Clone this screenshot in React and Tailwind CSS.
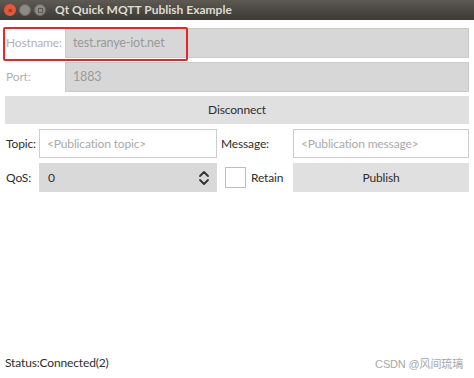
import React from 'react'

const font = { fontFamily: 'Lato, "Noto Sans", sans-serif' }

const App = () => {
    return (
        <div className="relative w-[474px] h-[378px] bg-white flex flex-col overflow-hidden text-[12px] tracking-[-0.15px] text-[#2e2e2e]" style={font}>
            {/* window title bar */}
            <div className="h-[20px] flex items-center bg-gradient-to-b from-[#5e5a53] to-[#3b3a35] px-[4px] gap-[3px]">
                <div className="w-[12px] h-[12px] rounded-full bg-[#e2583e] flex items-center justify-center text-[8px] leading-none text-[#7a2a1a] font-bold">×</div>
                <div className="w-[12px] h-[12px] rounded-full bg-[#8d8a84] border border-[#6e6b66]"></div>
                <div className="w-[12px] h-[12px] rounded-full bg-[#8d8a84] border border-[#6e6b66] flex items-center justify-center">
                    <div className="w-[5px] h-[5px] border border-[#5c5a55]"></div>
                </div>
                <div className="ml-[6px] text-[12px] font-bold text-[#dfdbd2] tracking-[0px]">Qt Quick MQTT Publish Example</div>
            </div>

            <div className="flex flex-col px-[5px] pt-[8px] gap-[4px]">
                <div className="flex items-center h-[30px]">
                    <span className="w-[60px] text-[#b2b2b2] pl-[1px] whitespace-nowrap">Hostname:</span>
                    <div className="flex-1 h-full bg-[#d7d7d7] border border-[#cbcbcb] flex items-center px-[7px] text-[#9a9a9a] text-[12.5px]">
                        test.ranye-iot.net
                    </div>
                </div>
                <div className="flex items-center h-[30px]">
                    <span className="w-[60px] text-[#b2b2b2] pl-[1px]">Port:</span>
                    <div className="flex-1 h-full bg-[#d7d7d7] border border-[#cbcbcb] flex items-center px-[7px] text-[#9a9a9a] text-[12.5px]">
                        1883
                    </div>
                </div>
                <button className="h-[28px] bg-[#e0e0e0] text-[#2e2e2e] text-[12px]">Disconnect</button>

                <div className="flex items-center h-[29px] mt-[1px]">
                    <span className="w-[34px] pl-[1px]">Topic:</span>
                    <div className="w-[178px] h-full bg-white border border-[#cdcdcd] flex items-center px-[7px] text-[#aaaaaa]">
                        &lt;Publication topic&gt;
                    </div>
                    <span className="w-[76px] pl-[4px]">Message:</span>
                    <div className="flex-1 h-full bg-white border border-[#cdcdcd] flex items-center px-[7px] text-[#aaaaaa]">
                        &lt;Publication message&gt;
                    </div>
                </div>

                <div className="flex items-center h-[29px] mt-[1px]">
                    <span className="w-[34px] pl-[1px]">QoS:</span>
                    <div className="w-[178px] h-full bg-[#d9d9d9] flex items-center justify-between pl-[9px] pr-[7px]">
                        <span>0</span>
                        <svg width="12" height="16" viewBox="0 0 12 16" fill="none" stroke="#333" strokeWidth="1.8" strokeLinecap="round" strokeLinejoin="round">
                            <path d="M2 6 L6 2 L10 6" />
                            <path d="M2 10 L6 14 L10 10" />
                        </svg>
                    </div>
                    <div className="w-[76px] flex items-center pl-[8px] gap-[5px]">
                        <div className="w-[21px] h-[21px] bg-white border border-[#bdbdbd]"></div>
                        <span>Retain</span>
                    </div>
                    <button className="flex-1 h-full bg-[#e0e0e0] text-[#2e2e2e] text-[12px]">Publish</button>
                </div>
            </div>

            <div className="mt-auto flex items-end justify-between px-[5px] pb-[6px]">
                <span>Status:Connected(2)</span>
                <span className="text-[11px] text-[#a8a8a8] pr-[6px]" style={{ fontFamily: '"Liberation Sans", "Noto Sans CJK SC", sans-serif' }}>CSDN @风间琉璃 </span>
            </div>

            {/* red annotation box */}
            <div className="absolute left-[3px] top-[27px] w-[185px] h-[34px] border-2 border-[#e8262a] rounded-[2px] pointer-events-none"></div>
        </div>
    )
}

export default App
